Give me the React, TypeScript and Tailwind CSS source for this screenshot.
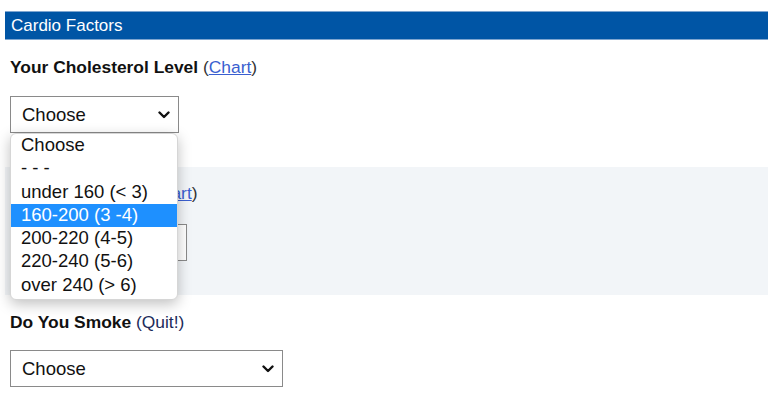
import React from 'react';

const options = ['Choose', '- - -', 'under 160 (< 3)', '160-200 (3 -4)', '200-220 (4-5)', '220-240 (5-6)', 'over 240 (> 6)'];

function Chevron() {
  return (
    <svg width="12" height="8" viewBox="0 0 12 8" className="shrink-0">
      <path d="M1.5 1.5 L6 6 L10.5 1.5" fill="none" stroke="#111" strokeWidth="2.4" strokeLinecap="round" strokeLinejoin="round" />
    </svg>
  );
}

function FakeSelect({ width }: { width: string }) {
  return (
    <div className={`${width} h-[37px] border border-[#8a8a8a] bg-white flex items-center justify-between pl-[11px] pr-[8px] text-[18.5px] text-[#111]`}>
      <span>Choose</span>
      <Chevron />
    </div>
  );
}

export default function App() {
  return (
    <div className="relative w-[768px] h-[401px] bg-white pt-[11px] pl-[5px] overflow-hidden" style={{ fontFamily: '"Liberation Sans", Arial, sans-serif' }}>
      <div className="h-[29px] bg-[#0055a5] text-white text-[17px] leading-[28px] px-[6px] border-y border-[#7fa6d0]">Cardio Factors</div>

      {/* cholesterol */}
      <div className="px-[5px] pt-[17px] pb-[34px]">
        <div className="text-[17.4px] leading-[20px] text-[#111]">
          <span className="font-bold">Your Cholesterol Level</span>{' '}
          <span className="text-[#333]">(<a className="text-[#3a5fd0] underline">Chart</a>)</span>
        </div>
        <div className="mt-[19px]">
          <FakeSelect width="w-[169px]" />
        </div>
      </div>

      {/* blood pressure */}
      <div className="bg-[#f2f5f8] px-[5px] pt-[16px] pb-[34px]">
        <div className="text-[17.4px] leading-[20px] text-[#111]">
          <span className="font-bold">Blood Pressure</span>{' '}
          <span className="text-[#333]">(<a className="text-[#3a5fd0] underline">Chart</a>)</span>
        </div>
        <div className="mt-[21px]">
          <FakeSelect width="w-[177px]" />
        </div>
      </div>

      {/* smoking */}
      <div className="px-[5px] pt-[17px]">
        <div className="text-[17.4px] leading-[20px] text-[#111]">
          <span className="font-bold">Do You Smoke</span>{' '}
          <span className="text-[#1c2a5a]">(Quit!)</span>
        </div>
        <div className="mt-[18px]">
          <FakeSelect width="w-[273px]" />
        </div>
      </div>

      {/* open dropdown list */}
      <div className="absolute left-[10px] top-[133px] w-[168px] bg-white rounded-[6px] border border-[#d6d6d6] shadow-[0_4px_14px_rgba(0,0,0,0.25)] pt-0 pb-[2px] text-[18.5px] text-[#111]">
        {options.map((o, i) => (
          <div key={o} className={`h-[23.3px] leading-[21px] px-[10px] ${i === 3 ? 'bg-[#1e90ff] text-white' : ''}`}>
            {o}
          </div>
        ))}
      </div>
    </div>
  );
}
